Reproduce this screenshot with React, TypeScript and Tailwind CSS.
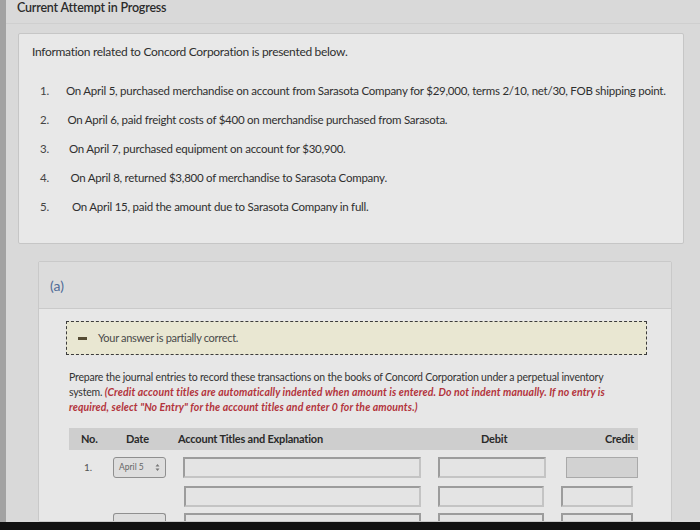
import React from 'react';

const items = [
  'On April 5, purchased merchandise on account from Sarasota Company for $29,000, terms 2/10, net/30, FOB shipping point.',
  'On April 6, paid freight costs of $400 on merchandise purchased from Sarasota.',
  'On April 7, purchased equipment on account for $30,900.',
  'On April 8, returned $3,800 of merchandise to Sarasota Company.',
  'On April 15, paid the amount due to Sarasota Company in full.',
];

function Field({ className = '' }: { className?: string }) {
  return (
    <div
      className={`h-[21px] border-2 border-[#9c9c9c] border-b-[#c4c4c4] border-r-[#c4c4c4] bg-[#e4e4e4] ${className}`}
    />
  );
}

export default function App() {
  return (
    <div
      className="w-[700px] h-[530px] overflow-hidden flex flex-col bg-black text-[#2f2f2f]"
      style={{ fontFamily: 'Lato, "Noto Sans", sans-serif' }}
    >
      <div className="h-[522px] flex overflow-hidden">
        <div className="w-[6px] shrink-0 bg-[#a3a3a3]" />
        <div className="flex-1 bg-[#d9d9d9] flex flex-col">
          {/* title */}
          <div className="h-[24px] px-[11px] border-b border-[#cfcfcf]">
            <h1 className="text-[12.5px] font-semibold leading-[16px] tracking-[-0.2px] text-[#2b2b2b]">
              Current Attempt in Progress
            </h1>
          </div>

          {/* info card */}
          <div className="mt-[9px] ml-[12px] w-[666px] h-[213px] bg-[#e8e8e8] border border-[#c6c6c6] rounded-[2px] px-[13px] pt-[10px]">
            <p className="text-[12px] leading-[16px] tracking-[-0.3px] text-[#2f2f2f]">
              Information related to Concord Corporation is presented below.
            </p>
            <ol className="mt-[22px] flex flex-col gap-[12px]">
              {items.map((t, i) => (
                <li key={i} className="flex text-[11.5px] leading-[17px] tracking-[-0.25px]">
                  <span className="w-[34px] pl-[8px] shrink-0 text-[#444]">{i + 1}.</span>
                  <span style={{ paddingLeft: i * 1.5 }}>{t}</span>
                </li>
              ))}
            </ol>
          </div>

          {/* part (a) */}
          <div className="mt-[17px] ml-[32px] w-[634px] flex-1 border border-[#c9c9c9] rounded-[2px] flex flex-col">
            <div className="h-[47px] bg-[#dcdcdc] border-b border-[#cacaca] flex items-center px-[11px]">
              <span className="text-[14px] text-[#4f6b97]">(a)</span>
            </div>
            <div className="flex-1 bg-[#e7e7e7] px-[27px] pt-[12px]">
              <div className="h-[34px] mr-[-3px] border border-dashed border-[#3c3c3c] bg-[#e9e7d2] flex items-center px-[11px] gap-[11px]">
                <span className="block w-[9px] h-[3px] bg-[#554c34]" />
                <span className="text-[11px] tracking-[-0.3px] text-[#4a4a4a]">Your answer is partially correct.</span>
              </div>

              <p className="mt-[15px] ml-[3px] mr-[14px] text-[10.5px] leading-[15px] tracking-[-0.2px] text-[#333]">
                Prepare the journal entries to record these transactions on the books of Concord Corporation under a perpetual inventory system.{' '}
                <span className="italic font-bold tracking-[0.1px] text-[#b3343c]">
                  (Credit account titles are automatically indented when amount is entered. Do not indent manually. If no entry is required, select "No Entry" for the account titles and enter 0 for the amounts.)
                </span>
              </p>

              <div className="mt-[13px] ml-[3px] w-[569px]">
                <div className="h-[22px] bg-[#cecece] grid grid-cols-[44px_65px_253px_125px_1fr] items-center text-[11px] font-bold tracking-[-0.2px] text-[#2a2a2a]">
                  <span className="pl-[12px]">No.</span>
                  <span className="pl-[13px]">Date</span>
                  <span>Account Titles and Explanation</span>
                  <span className="pl-[50px]">Debit</span>
                  <span className="text-right pr-[4px]">Credit</span>
                </div>

                <div className="mt-[7px] grid grid-cols-[44px_65px_253px_125px_1fr] items-center">
                  <span className="pl-[15px] text-[10px] text-[#555]">1.</span>
                  <div className="w-[53px] h-[21px] border border-[#8f8f8f] rounded-[3px] bg-[#dedede] flex items-center justify-between px-[5px]">
                    <span className="text-[8.5px] text-[#666]">April 5</span>
                    <svg width="5" height="9" viewBox="0 0 5 9" className="text-[#777]">
                      <path d="M0.5 3.5 L2.5 1 L4.5 3.5 Z M0.5 5.5 L2.5 8 L4.5 5.5 Z" fill="currentColor" />
                    </svg>
                  </div>
                  <Field className="ml-[5px] w-[238px] bg-[#e2e2e2]" />
                  <Field className="ml-[7px] w-[108px] bg-[#e2e2e2]" />
                  <div className="ml-[10px] h-[21px] border border-[#a9a9a9] bg-[#d2d2d2]" />
                </div>

                <div className="mt-[8px] grid grid-cols-[44px_65px_253px_125px_1fr] items-center">
                  <span />
                  <span />
                  <Field className="ml-[6px] w-[237px]" />
                  <Field className="ml-[7px] w-[106px]" />
                  <Field className="ml-[5px] mr-[5px]" />
                </div>

                <div className="mt-[6px] grid grid-cols-[44px_65px_253px_125px_1fr] items-start">
                  <span />
                  <div className="w-[53px] h-[8px] border border-b-0 border-[#8f8f8f] rounded-t-[3px] bg-[#dedede]" />
                  <div className="ml-[6px] w-[237px] h-[8px] border-2 border-b-0 border-[#9c9c9c] bg-[#e4e4e4]" />
                  <div className="ml-[7px] w-[106px] h-[8px] border-2 border-b-0 border-[#9c9c9c] bg-[#e4e4e4]" />
                  <div className="ml-[5px] mr-[5px] h-[8px] border-2 border-b-0 border-[#9c9c9c] bg-[#e4e4e4]" />
                </div>
              </div>
            </div>
          </div>
        </div>
      </div>
      <div className="h-[8px] bg-[#111]" />
    </div>
  );
}
